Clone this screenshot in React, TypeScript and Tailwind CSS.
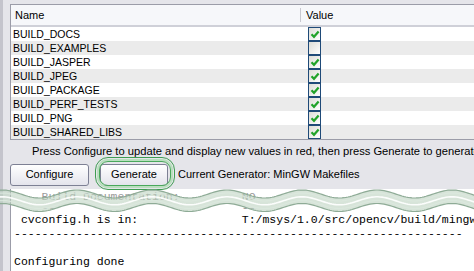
import React from 'react'

const rows: [string, boolean][] = [
  ['BUILD_DOCS', true],
  ['BUILD_EXAMPLES', false],
  ['BUILD_JASPER', true],
  ['BUILD_JPEG', true],
  ['BUILD_PACKAGE', true],
  ['BUILD_PERF_TESTS', true],
  ['BUILD_PNG', true],
  ['BUILD_SHARED_LIBS', true],
]

function CheckBox({ checked }: { checked: boolean }) {
  return (
    <div className="w-[13px] h-[14px] border border-[#1f4a78] bg-gradient-to-br from-[#dcdcd6] to-white flex items-center justify-center">
      {checked && (
        <svg width="10" height="9" viewBox="0 0 10 9">
          <path d="M1.5 4.2 L4 6.8 L8.6 1.6" fill="none" stroke="#22a32a" strokeWidth="2.2" />
        </svg>
      )}
    </div>
  )
}

// wavy "cut" band drawn over the output
function WaveBand() {
  const top = (x: number) => 10 - 4 * Math.cos((2 * Math.PI * (x - 2)) / 75)
  const line = (off: number) => {
    let d = ''
    for (let x = -4; x <= 480; x += 2) d += `${x === -4 ? 'M' : 'L'}${x} ${(top(x) + off).toFixed(2)} `
    return d
  }
  let band = line(0)
  for (let x = 480; x >= -4; x -= 2) band += `L${x} ${(top(x) + 13.5).toFixed(2)} `
  band += 'Z'
  return (
    <svg className="absolute left-0 top-[184px]" width="474" height="32" viewBox="0 0 474 32">
      <path d={band} fill="#bcd2c0" fillOpacity="0.6" />
      <path d={line(3)} fill="none" stroke="#dce8de" strokeWidth="1.2" strokeOpacity="0.8" />
      <path d={line(6.8)} fill="none" stroke="#ffffff" strokeWidth="1.6" strokeOpacity="0.9" />
      <path d={line(10.5)} fill="none" stroke="#dce8de" strokeWidth="1.2" strokeOpacity="0.8" />
      <path d={line(0)} fill="none" stroke="#8eab96" strokeWidth="1.2" />
      <path d={line(13.5)} fill="none" stroke="#8eab96" strokeWidth="1.2" />
    </svg>
  )
}

export default function App() {
  return (
    <div className="relative w-[474px] h-[271px] overflow-hidden bg-[#e5e5ea] font-['Liberation_Sans',Arial,sans-serif] text-[11px] text-black">
      <div className="absolute left-0 top-0 bottom-0 w-[3px] bg-[#c4c4cc]" />
      <div className="pt-[4px] pl-[10px]">
        {/* cache table */}
        <div className="border border-r-0 border-[#9b9ca8] bg-white">
          <div className="flex h-[22px] bg-[#f6f7fa] border-b-2 border-[#cfd0d8]">
            <div className="w-[290px] flex items-center pl-[4px] border-r border-[#c8c8d0] my-[3px]">Name</div>
            <div className="flex-1 flex items-center pl-[5px]">Value</div>
          </div>
          {rows.map(([name, on], i) => (
            <div key={name} className={`flex h-[14px] items-center ${i % 2 ? 'bg-[#ebebeb]' : 'bg-white'}`}>
              <div className="w-[297px] pl-[2px] text-[10.5px] leading-[14px]">{name}</div>
              <CheckBox checked={on} />
            </div>
          ))}
        </div>
      </div>

      <div className="h-[23px] flex items-center pl-[32px] whitespace-nowrap text-[11.2px]">
        Press Configure to update and display new values in red, then press Generate to generate selected build files.
      </div>

      <div className="relative h-[23px] flex items-center pl-[10px] whitespace-nowrap">
        <button className="w-[79px] h-[22px] rounded-[3px] border border-[#7d8094] bg-gradient-to-b from-white to-[#e4e4ec]">
          Configure
        </button>
        <div className="ml-[11px] w-[68px] h-[22px] rounded-[3px] border border-[#7d8094] bg-gradient-to-b from-white to-[#e4e4ec] flex items-center justify-center">
          Generate
        </div>
        <span className="ml-[10px]">Current Generator: MinGW Makefiles</span>
        {/* green highlight ring */}
        <div className="absolute left-[95px] top-[-6px] w-[80px] h-[33px] rounded-[13px] border-[1.5px] border-[#3f9c52] p-[1px]">
          <div className="w-full h-full rounded-[11px] border-[2px] border-[#b9dfbe]">
            <div className="w-full h-full rounded-[9px] border border-[#4aa85c]" />
          </div>
        </div>
      </div>

      {/* output log */}
      <div className="mt-[3px] ml-[10px] h-[90px] bg-white border-l border-[#9b9ca8] pl-[3px] pt-[1px] font-['Liberation_Mono','Courier_New',monospace] text-[11.5px] leading-[14px] whitespace-pre">
        <div className="h-[14px] text-[#9a9a9a]">{'    Build Documentation:         NO'}</div>
        <div className="-mt-[3px] h-[12px] text-[#9a9a9a]">{'    --                           --'}</div>
        <div className="h-[14px]">{' cvconfig.h is in:               T:/msys/1.0/src/opencv/build/mingw'}</div>
        <div className="h-[14px]">{'-'.repeat(65)}</div>
        <div className="h-[14px]">{' '}</div>
        <div className="h-[14px]">Configuring done</div>
      </div>

      <WaveBand />
    </div>
  )
}
